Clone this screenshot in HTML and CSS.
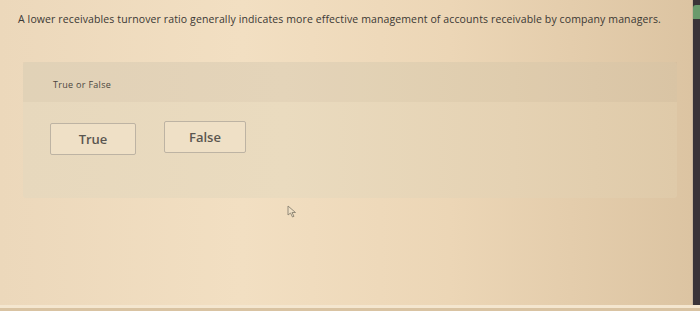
FILE: index.html
```html
<!DOCTYPE html>
<html lang="en">

<head>
    <meta charset="UTF-8">
    <meta name="viewport" content="width=device-width, initial-scale=1.0">
    <title>True or False</title>
    <link rel="stylesheet" href="styles.css">
</head>

<body>
    <div class="screen">
        <div class="page">
            <p class="question">A lower receivables turnover ratio generally indicates more effective management of accounts receivable by company managers.</p>

            <div class="panel">
                <div class="panel-head">True or False</div>
                <div class="answers">
                    <button type="button" class="answer answer-true">True</button>
                    <button type="button" class="answer answer-false">False</button>
                </div>
            </div>

            <!-- mouse pointer -->
            <svg class="pointer" width="10" height="13" viewBox="0 0 10 13">
                <path d="M1 1 L1 10 L3.5 8 L5.5 12 L7 11.3 L5 7.5 L8.5 7.5 Z" fill="#efe0c6" stroke="#8a8272" stroke-width="0.9"/>
            </svg>
        </div>
        <div class="edge">
            <div class="edge-tab"></div>
        </div>
    </div>
</body>

</html>
```

FILE: styles.css
```css
* {
    margin: 0;
    padding: 0;
    box-sizing: border-box;
}

body,
html {
    overflow: hidden;
}

body {
    font-family: "Open Sans", Arial, sans-serif;
    background: #d9c3a2;
    width: 700px;
    height: 311px;
}

.screen {
    display: flex;
    height: 308px;
    border-bottom: 3px solid #f4e6cf;
}

.page {
    position: relative;
    flex: 1;
    padding: 12px 0 0 18px;
    background: linear-gradient(90deg, #ecd8bb 0%, #f2dfc2 35%, #ecd6b6 65%, #dcc4a2 100%);
}

.question {
    font-size: 10.5px;
    line-height: 14px;
    color: #3b3834;
    letter-spacing: 0.12px;
    white-space: nowrap;
}

.panel {
    margin: 36px 0 0 5px;
    width: 654px;
    height: 136px;
    border-radius: 3px;
    background: linear-gradient(90deg, #e7d8bd 0%, #eadbbf 40%, #e5d2b3 75%, #dfcaa9 100%);
}

.panel-head {
    height: 40px;
    padding: 16px 0 0 30px;
    font-size: 9px;
    letter-spacing: 0.3px;
    color: #4a4640;
    background: rgba(120, 100, 70, 0.05);
}

.answers {
    display: flex;
    gap: 28px;
    padding: 19px 0 0 27px;
}

button {
    font-family: "Open Sans", Arial, sans-serif;
    cursor: pointer;
}

.answer {
    width: 84px;
    height: 32px;
    font-size: 13px;
    font-weight: 600;
    color: #5a5650;
    background: #efe0c6;
    border: 1px solid #bdb3a3;
    border-radius: 2px;
}

.answer-true {
    margin-top: 2px;
    width: 86px;
}

.answer-false {
    width: 82px;
}

.pointer {
    position: absolute;
    left: 287px;
    top: 205px;
}

.edge {
    width: 8px;
    background: #3b3438;
    border-left: 1px solid #c9b69a;
}

.edge-tab {
    height: 14px;
    margin-top: 5px;
    background: #6a9a6c;
    border-radius: 3px 0 0 0;
}
```
